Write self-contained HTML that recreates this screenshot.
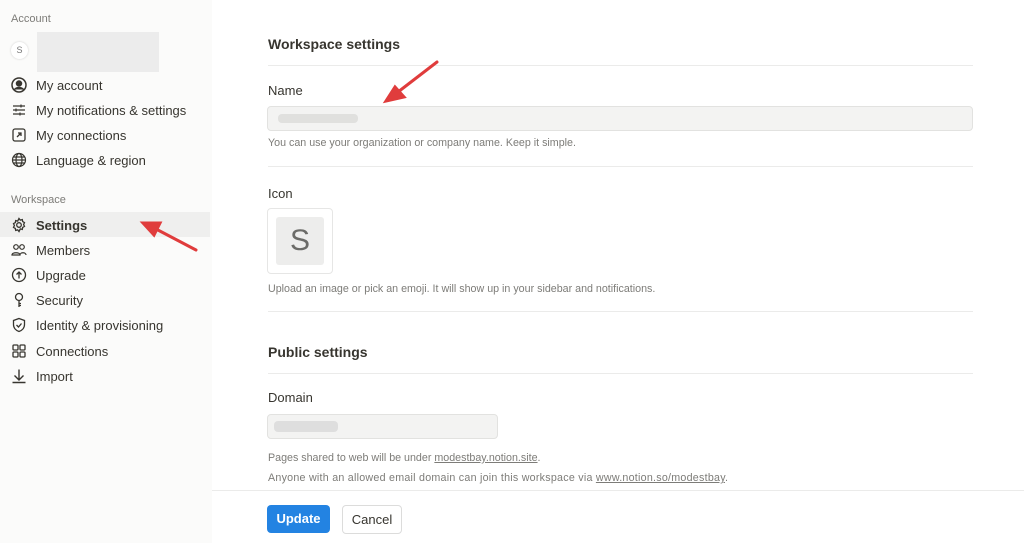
<!DOCTYPE html><html><head><style>
body{margin:0;width:1024px;height:543px;position:relative;font-family:"Liberation Sans",sans-serif;background:#fff;overflow:hidden;color:#37352f}
.sb{position:absolute;left:0;top:0;width:212px;height:543px;background:#fbfbfa}
.sec{position:absolute;left:11px;font-size:11px;color:#7d7c78}
.it{position:absolute;left:0;width:210px;height:25px;font-size:13px;line-height:25px;color:#37352f}
.it span{position:absolute;left:36px;top:1px}
.it svg{position:absolute;left:11px;top:5px}
.a{position:absolute;font-size:13px}
.sm{position:absolute;font-size:10.7px;color:#7d7c78}
.hr{position:absolute;left:268px;width:705px;height:1px;background:#ebebea}
.inp{position:absolute;background:#f3f3f2;border:1px solid #e2e2e0;border-radius:4px}
</style></head><body>
<div class="sb">
<div class="sec" style="top:13px">Account</div>
<div style="position:absolute;left:11px;top:42px;width:17px;height:17px;border-radius:50%;background:#fff;box-shadow:0 0 2px #ccc;font-size:9px;text-align:center;line-height:17px;color:#777">S</div>
<div style="position:absolute;left:37px;top:32px;width:122px;height:40px;background:#ececec"></div>
<div class="it" style="top:72px"><svg width="16" height="16" viewBox="0 0 16 16" fill="none" stroke="#37352f" stroke-width="1.5"><circle cx="8" cy="8" r="7"/><circle cx="8" cy="6.5" r="2.5" fill="#37352f"/><path d="M3.5 12.5c2-2.5 7-2.5 9 0" fill="#37352f"/></svg><span>My account</span></div>
<div class="it" style="top:97px"><svg width="16" height="16" viewBox="0 0 16 16" stroke="#37352f" stroke-width="1.2"><path d="M2 4h12M2 8h12M2 12h12"/><path d="M10 2.5v3M5 6.5v3M9 10.5v3"/></svg><span>My notifications &amp; settings</span></div>
<div class="it" style="top:122px"><svg width="16" height="16" viewBox="0 0 16 16" fill="none" stroke="#37352f" stroke-width="1.3"><rect x="2" y="2" width="12" height="12" rx="2"/><path d="M6 10l4-4M7 6h3v3"/></svg><span>My connections</span></div>
<div class="it" style="top:147px"><svg width="16" height="16" viewBox="0 0 16 16" fill="none" stroke="#37352f" stroke-width="1.2"><circle cx="8" cy="8" r="6.5"/><ellipse cx="8" cy="8" rx="3" ry="6.5"/><path d="M1.5 8h13M2.5 5h11M2.5 11h11"/></svg><span>Language &amp; region</span></div>
<div class="sec" style="top:194px">Workspace</div>
<div class="it" style="top:212px;background:#efefee;font-weight:bold"><svg width="16" height="16" viewBox="0 0 16 16" fill="none" stroke="#37352f" stroke-width="1.3"><circle cx="8" cy="8" r="2.3"/><path d="M8 1.5l1.3 1.6 2-.5.4 2 1.8 1-.9 1.9.9 1.9-1.8 1-.4 2-2-.5L8 14.5l-1.3-1.6-2 .5-.4-2-1.8-1 .9-1.9-.9-1.9 1.8-1 .4-2 2 .5z"/></svg><span>Settings</span></div>
<div class="it" style="top:237px"><svg width="16" height="16" viewBox="0 0 16 16" fill="none" stroke="#37352f" stroke-width="1.2"><circle cx="5" cy="5" r="2.3"/><circle cx="11" cy="5" r="2.3"/><path d="M1 13c0-3 8-3 8 0zM9 13c0-3 6-3 6 0"/></svg><span>Members</span></div>
<div class="it" style="top:262px"><svg width="16" height="16" viewBox="0 0 16 16" fill="none" stroke="#37352f" stroke-width="1.3"><circle cx="8" cy="8" r="6.5"/><path d="M8 11.5V5M5.5 7.5L8 5l2.5 2.5"/></svg><span>Upgrade</span></div>
<div class="it" style="top:287px"><svg width="16" height="16" viewBox="0 0 16 16" fill="none" stroke="#37352f" stroke-width="1.3"><circle cx="8" cy="5" r="3.5"/><path d="M8 8.5v6.5M8 11.5h2M8 13.5h2"/></svg><span>Security</span></div>
<div class="it" style="top:312px"><svg width="16" height="16" viewBox="0 0 16 16" fill="none" stroke="#37352f" stroke-width="1.3"><path d="M8 1.5l5.5 2v4c0 3.5-2.5 6-5.5 7-3-1-5.5-3.5-5.5-7v-4z"/><path d="M5.5 8l2 2 3-3.5"/></svg><span>Identity &amp; provisioning</span></div>
<div class="it" style="top:338px"><svg width="16" height="16" viewBox="0 0 16 16" fill="none" stroke="#37352f" stroke-width="1.3"><rect x="2" y="2" width="5" height="5" rx="1"/><rect x="9" y="2" width="5" height="5" rx="1"/><rect x="2" y="9" width="5" height="5" rx="1"/><rect x="9" y="9" width="5" height="5" rx="1"/></svg><span>Connections</span></div>
<div class="it" style="top:363px"><svg width="16" height="16" viewBox="0 0 16 16" fill="none" stroke="#37352f" stroke-width="1.4"><path d="M8 1.5v10M3.5 7.5L8 12l4.5-4.5M1.5 14.5h13"/></svg><span>Import</span></div>
</div>
<div class="a" style="left:268px;top:36px;font-size:14px;font-weight:bold">Workspace settings</div>
<div class="hr" style="top:65px"></div>
<div class="a" style="left:268px;top:83px">Name</div>
<div class="inp" style="left:267px;top:106px;width:704px;height:23px"><div style="position:absolute;left:10px;top:7px;width:80px;height:9px;background:#e0e0de;border-radius:4px"></div></div>
<div class="sm" style="left:268px;top:137px">You can use your organization or company name. Keep it simple.</div>
<div class="hr" style="top:166px"></div>
<div class="a" style="left:268px;top:186px">Icon</div>
<div style="position:absolute;left:267px;top:208px;width:64px;height:64px;border:1px solid #e6e6e5;border-radius:4px;background:#fff"><div style="position:absolute;left:8px;top:8px;width:48px;height:48px;background:#ededec;border-radius:3px;font-size:30px;color:#6b6b68;text-align:center;line-height:48px">S</div></div>
<div class="sm" style="left:268px;top:283px">Upload an image or pick an emoji. It will show up in your sidebar and notifications.</div>
<div class="hr" style="top:311px"></div>
<div class="a" style="left:268px;top:344px;font-size:14px;font-weight:bold">Public settings</div>
<div class="hr" style="top:373px"></div>
<div class="a" style="left:268px;top:390px">Domain</div>
<div class="inp" style="left:267px;top:414px;width:229px;height:23px"><div style="position:absolute;left:6px;top:6px;width:64px;height:11px;background:#dedede;border-radius:4px"></div></div>
<div class="sm" style="left:268px;top:452px">Pages shared to web will be under <u>modestbay.notion.site</u>.</div>
<div class="sm" style="left:268px;top:472px;letter-spacing:.25px">Anyone with an allowed email domain can join this workspace via <u>www.notion.so/modestbay</u>.</div>
<div style="position:absolute;left:212px;top:490px;width:812px;height:1px;background:#ebebea"></div>
<div style="position:absolute;left:267px;top:505px;width:63px;height:28px;background:#2383e2;border-radius:4px;color:#fff;font-size:13px;font-weight:bold;text-align:center;line-height:28px">Update</div>
<div style="position:absolute;left:342px;top:505px;width:58px;height:27px;border:1px solid #dcdcdb;border-radius:4px;font-size:13px;text-align:center;line-height:27px">Cancel</div>
<svg style="position:absolute;left:0;top:0" width="1024" height="543"><g stroke="#e03c3c" stroke-width="3" fill="#e03c3c" stroke-linecap="round"><path d="M437 62L398 92"/><path d="M386 101l18-4-9-10z"/><path d="M196 250L156 229"/><path d="M143 223l11 12 6-12z"/></g></svg>
</body></html>
